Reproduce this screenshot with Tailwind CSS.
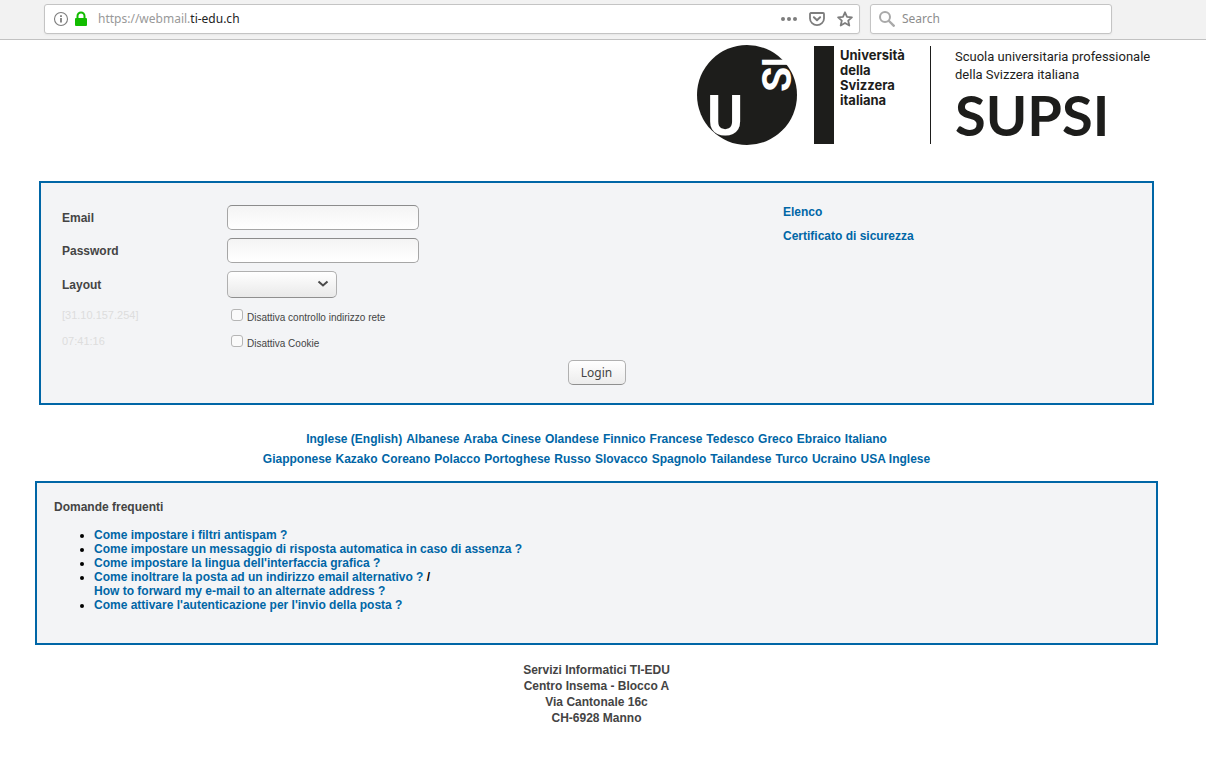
<!DOCTYPE html>
<html lang="it">
<head>
    <meta charset="UTF-8">
    <meta name="viewport" content="width=device-width, initial-scale=1.0">
    <title>TI-EDU Webmail</title>
    <script src="https://cdn.jsdelivr.net/npm/@tailwindcss/browser@4"></script>
</head>
<body class="bg-white font-['Liberation_Sans',Arial,sans-serif] text-xs text-[#444444]">
    <!-- browser bar -->
    <header class="flex h-10 items-start gap-[10px] border-b border-[#c2c2c2] bg-[#f2f2f2] pt-1 pr-[94px] pl-11 font-['Noto_Sans',sans-serif] text-xs">
        <div class="flex h-[30px] flex-1 items-center rounded-[3px] border border-[#c4c4c4] bg-white px-2 shadow-xs">
            <svg class="size-4" viewBox="0 0 16 16" fill="none" stroke="#7d7d7d">
                <circle cx="8" cy="8" r="6.5" stroke-width="1.1"/>
                <path d="M8 7v4.6" stroke-width="1.8"/>
                <path d="M8 4.2v1.7" stroke-width="1.8"/>
            </svg>
            <svg class="ml-1 size-4" viewBox="0 0 16 16">
                <path d="M4.5 8V5a3.5 3.5 0 0 1 7 0v3" fill="none" stroke="#12bc00" stroke-width="2"/>
                <rect x="2" y="7" width="12" height="8" rx="1" fill="#12bc00"/>
            </svg>
            <p class="ml-[9px] flex-1 text-[#999999]">https://webmail.<span class="text-[#222222]">ti-edu.ch</span></p>
            <button type="button" aria-label="Page actions">
                <svg class="size-4" viewBox="0 0 16 16" fill="#7d7d7d">
                    <circle cx="2" cy="8" r="2"/><circle cx="8" cy="8" r="2"/><circle cx="14" cy="8" r="2"/>
                </svg>
            </button>
            <button type="button" aria-label="Save to Pocket" class="ml-3">
                <svg class="size-4" viewBox="0 0 16 16" fill="none" stroke="#7d7d7d" stroke-width="1.8" stroke-linecap="round" stroke-linejoin="round">
                    <path d="M1.9 2h12.2a.9.9 0 0 1 .9.9V7.5a7 6.6 0 0 1-14 0V2.9A.9.9 0 0 1 1.9 2z"/>
                    <path d="M4.9 6.3 8 9.2l3.1-2.9" stroke-width="2"/>
                </svg>
            </button>
            <button type="button" aria-label="Bookmark" class="ml-3 -mr-2 pr-[6px]">
                <svg class="size-4" viewBox="0 0 16 16" fill="none" stroke="#7d7d7d" stroke-width="1.8" stroke-linejoin="round">
                    <path d="m8 1.3 2 4.5 4.9.5-3.7 3.3 1.1 4.9L8 12l-4.300 2.500 1.100-4.900L1.100 6.300 6 5.800z"/>
                </svg>
            </button>
        </div>
        <label class="flex h-[30px] w-[242px] items-center gap-[7px] rounded-[3px] border border-[#c4c4c4] bg-white px-2 shadow-xs">
            <svg class="size-4 shrink-0" viewBox="0 0 16 16" fill="none" stroke="#a9a9a9" stroke-width="2">
                <circle cx="6" cy="6" r="5"/>
                <path d="m9.500 9.500 6 6" stroke-width="2.400"/>
            </svg>
            <input type="search" placeholder="Search" aria-label="Search" class="min-w-0 flex-1 outline-none placeholder:text-[#8d8d8d]">
        </label>
    </header>

    <main class="pr-12 pl-[35px]">
        <!-- logos -->
        <div class="flex justify-end pt-[5px] pr-1 text-[#1d1d1b]">
            <svg class="h-[101px] w-[101px] overflow-visible" viewBox="0 0 101 101" role="img" aria-label="USI">
                <circle cx="50" cy="50" r="50" fill="#1d1d1b"/>
                <g fill="#fff" font-family="Roboto, sans-serif">
                    <text x="10" y="90" font-size="55" font-weight="700">U</text>
                    <text transform="translate(94 47) rotate(-90)" font-size="41" font-weight="700">S</text>
                    <text transform="translate(94 23) rotate(-90)" font-size="41" font-weight="500">I</text>
                </g>
            </svg>
            <div class="mt-px ml-4 h-[98px] w-5 bg-[#1d1d1b]"></div>
            <p class="mt-[3px] ml-[6px] w-[90px] font-['Inter',sans-serif] text-[13px] leading-[15px] font-bold">Università<br>della<br>Svizzera<br>italiana</p>
            <div class="mt-px h-[98px] w-px bg-[#1d1d1b]"></div>
            <div class="ml-6 w-[199px] whitespace-nowrap">
                <p class="mt-[3px] font-['Roboto',sans-serif] text-[13px] leading-[18px]">Scuola universitaria professionale<br>della Svizzera italiana</p>
                <p class="mt-px font-['Lato',sans-serif] text-[56px] leading-[60px] font-bold">SUPSI</p>
            </div>
        </div>

        <!-- login -->
        <form class="mx-1 mt-[35px] border-2 border-[#0066a6] bg-[#f3f4f6] px-[21px] pt-[22px] pb-[18px]">
            <div class="flex">
                <div class="grid w-[721px] grid-cols-[165px_1fr] items-center gap-y-2 font-bold">
                    <label for="email">Email</label>
                    <input id="email" type="text" class="h-[25px] w-48 rounded-[5px] border border-[#a6a6a6] border-t-[#8c8c8c] bg-linear-to-b from-[#f4f4f4] to-white px-2 font-normal">
                    <label for="password">Password</label>
                    <input id="password" type="password" class="h-[25px] w-48 rounded-[5px] border border-[#a6a6a6] border-t-[#8c8c8c] bg-linear-to-b from-[#f4f4f4] to-white px-2 font-normal">
                    <label for="layout">Layout</label>
                    <div class="relative w-[110px]">
                        <select id="layout" class="block h-[27px] w-full appearance-none rounded-[5px] border border-[#b0b0b0] border-b-[#8f8f8f] bg-linear-to-b from-white to-[#e9e9e9] px-2">
                            <option></option>
                        </select>
                        <svg class="pointer-events-none absolute top-2 right-2 h-[10px] w-3" viewBox="0 0 12 10" fill="none" stroke="#4a4a4a" stroke-width="2">
                            <path d="m1.500 2.500 4.500 4 4.500-4"/>
                        </svg>
                    </div>
                    <span class="text-[11px] leading-[18px] font-normal text-[#dddddd]">[31.10.157.254]</span>
                    <label class="ml-1 flex h-[18px] items-baseline gap-1 text-[10px] leading-6 font-normal">
                        <input type="checkbox" class="size-3 appearance-none rounded-[3px] border border-[#b5b5b5] bg-[#fafafa] checked:bg-[#0066a6]">
                        Disattiva controllo indirizzo rete
                    </label>
                    <span class="text-[11px] leading-[18px] font-normal text-[#dddddd]">07:41:16</span>
                    <label class="ml-1 flex h-[18px] items-baseline gap-1 text-[10px] leading-6 font-normal">
                        <input type="checkbox" class="size-3 appearance-none rounded-[3px] border border-[#b5b5b5] bg-[#fafafa] checked:bg-[#0066a6]">
                        Disattiva Cookie
                    </label>
                </div>
                <div class="-mt-[5px] flex flex-col items-start leading-6 font-bold text-[#0066a6]">
                    <a href="#">Elenco</a>
                    <a href="#">Certificato di sicurezza</a>
                </div>
            </div>
            <button type="submit" class="mx-auto mt-[10px] block h-[25px] w-[58px] rounded-[5px] border border-[#b0b0b0] border-b-[#8f8f8f] bg-linear-to-b from-white to-[#ececec] font-['Noto_Sans',sans-serif] text-xs">Login</button>
        </form>

        <nav class="mt-6 leading-5 font-bold text-[#0066a6]">
            <div class="flex justify-center gap-1">
                <a href="#">Inglese (English)</a>
                <a href="#">Albanese</a>
                <a href="#">Araba</a>
                <a href="#">Cinese</a>
                <a href="#">Olandese</a>
                <a href="#">Finnico</a>
                <a href="#">Francese</a>
                <a href="#">Tedesco</a>
                <a href="#">Greco</a>
                <a href="#">Ebraico</a>
                <a href="#">Italiano</a>
            </div>
            <div class="flex justify-center gap-1">
                <a href="#">Giapponese</a>
                <a href="#">Kazako</a>
                <a href="#">Coreano</a>
                <a href="#">Polacco</a>
                <a href="#">Portoghese</a>
                <a href="#">Russo</a>
                <a href="#">Slovacco</a>
                <a href="#">Spagnolo</a>
                <a href="#">Tailandese</a>
                <a href="#">Turco</a>
                <a href="#">Ucraino</a>
                <a href="#">USA Inglese</a>
            </div>
        </nav>

        <!-- faq -->
        <section class="mt-3 border-2 border-[#0066a6] bg-[#f3f4f6] px-[17px] pt-[17px] pb-[31px] leading-[14px] font-bold">
            <h2>Domande frequenti</h2>
            <ul class="mt-[14px] list-disc pl-10 text-black">
                <li><a href="#" class="text-[#0066a6]">Come impostare i filtri antispam ?</a></li>
                <li><a href="#" class="text-[#0066a6]">Come impostare un messaggio di risposta automatica in caso di assenza ?</a></li>
                <li><a href="#" class="text-[#0066a6]">Come impostare la lingua dell'interfaccia grafica ?</a></li>
                <li><a href="#" class="text-[#0066a6]">Come inoltrare la posta ad un indirizzo email alternativo ?</a> /<br>
                    <a href="#" class="text-[#0066a6]">How to forward my e-mail to an alternate address ?</a></li>
                <li><a href="#" class="text-[#0066a6]">Come attivare l'autenticazione per l'invio della posta ?</a></li>
            </ul>
        </section>

        <footer class="py-[17px] text-center leading-4 font-bold">
            Servizi Informatici TI-EDU<br>
            Centro Insema - Blocco A<br>
            Via Cantonale 16c<br>
            CH-6928 Manno
        </footer>
    </main>
</body>
</html>
